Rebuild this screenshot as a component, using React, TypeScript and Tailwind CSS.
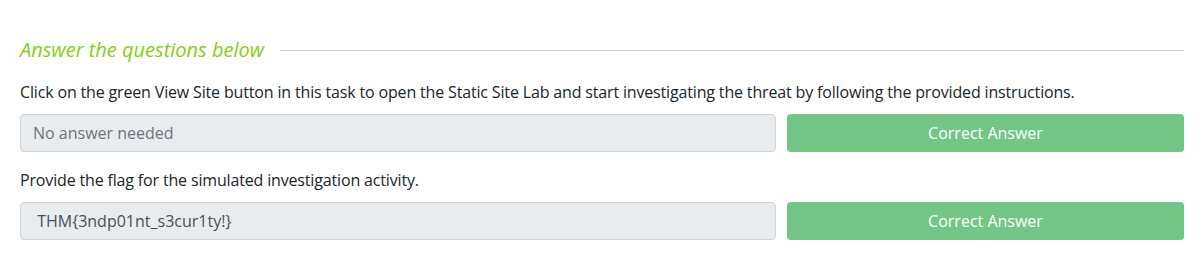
import React from "react";

type Question = {
  id: number;
  texto: string;
  respuesta: string;
  placeholder: string;
};

const preguntas: Question[] = [
  {
    id: 1,
    texto:
      "Click on the green View Site button in this task to open the Static Site Lab and start investigating the threat by following the provided instructions.",
    respuesta: "",
    placeholder: "No answer needed",
  },
  {
    id: 2,
    texto: "Provide the flag for the simulated investigation activity.",
    respuesta: " THM{3ndp01nt_s3cur1ty!}",
    placeholder: "",
  },
];

export default function App() {
  return (
    <main
      className="min-h-[260px] bg-white px-5 pt-[35px] text-[#212529]"
      style={{ fontFamily: '"Open Sans", "Noto Sans", sans-serif' }}
    >
      <div className="flex items-center gap-4">
        <h4 className="text-[20px] italic leading-[30px] text-[#88cc14]">
          Answer the questions below
        </h4>
        <div className="h-px flex-1 bg-[#cccccc]" />
      </div>

      <div className="mt-[15px] flex flex-col gap-4">
        {preguntas.map((p) => (
          <div key={p.id}>
            <p className="text-[16px] leading-6 tracking-[-0.16px]">{p.texto}</p>
            <div className="mt-[10px] flex gap-[11px]">
              <input
                type="text"
                disabled
                value={p.respuesta}
                placeholder={p.placeholder}
                readOnly
                className="h-[38px] flex-1 rounded border border-[#ced4da] bg-[#e9ecef] px-3 text-[16px] text-[#495057] placeholder:text-[#6c757d]"
              />
              <button
                type="button"
                disabled
                className="h-[38px] w-[397px] rounded bg-[#73c686] text-[16px] text-white"
              >
                Correct Answer
              </button>
            </div>
          </div>
        ))}
      </div>
    </main>
  );
}
